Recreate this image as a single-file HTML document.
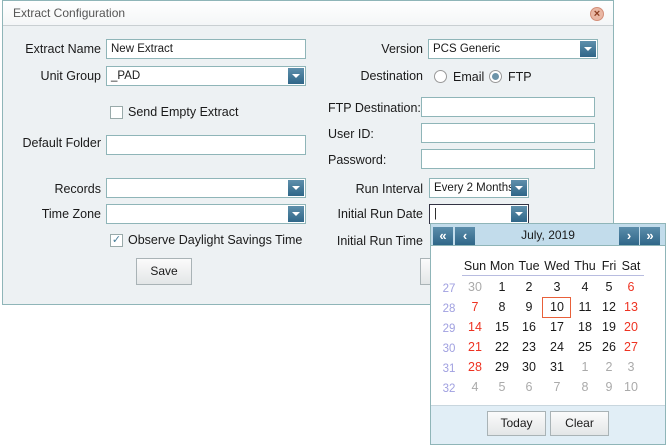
<!DOCTYPE html>
<html><head><meta charset="utf-8"><style>
*{box-sizing:border-box;margin:0;padding:0}
body{width:666px;height:445px;background:#fff;position:relative;overflow:hidden;font-family:"Liberation Sans",sans-serif;font-size:12px;color:#1a1a1a}
.a{position:absolute}
.dlg{left:2px;top:0;width:612px;height:305px;border:1px solid #8fb5b8;background:#edf1f3}
.title{left:3px;top:1px;width:610px;height:25px;background:linear-gradient(#fff,#f4f6f7);border-bottom:1px solid #c9cfd2}
.lbl{position:absolute;text-align:right;white-space:nowrap;font-size:12.5px}
.in{position:absolute;background:#fff;border:1px solid #8fb5b8;height:20px;padding:3px 4px;font-size:11.5px;white-space:nowrap;overflow:hidden}
.dd{position:absolute;right:1px;top:1px;width:16px;height:16px;background:linear-gradient(#5e8fab,#2f6688)}
.dd:after{content:"";position:absolute;left:4px;top:6px;border-left:4px solid transparent;border-right:4px solid transparent;border-top:4px solid #fff}
.cb{position:absolute;width:13px;height:13px;border:1px solid #9aa;background:#fff}
.btn{position:absolute;border:1px solid #a9b3b6;background:linear-gradient(#fbfbfb,#e3e6e7);text-align:center;font-size:12px}
.cal{left:430px;top:223px;width:236px;height:222px;border:1px solid #8fb5b8;background:#fff}
.hb{position:absolute;top:3px;width:20px;height:18px;background:linear-gradient(#5b8dab,#2f6688);color:#fff;font-size:13px;text-align:center;line-height:17px;font-weight:bold}
.c{position:absolute;width:26px;text-align:center;font-size:12.5px}
.g{color:#aaa}.r{color:#e32}.w{color:#a0a0e0;font-size:11.5px;width:20px}
</style></head><body>
<div class="a dlg"></div>
<div class="a title"></div>
<div class="a" style="left:13px;top:6px;color:#555;font-size:12px">Extract Configuration</div>
<div class="a" style="left:590px;top:7px;width:14px;height:14px;border-radius:50%;background:#e9b7a4;border:1px solid #d38e78;color:#8b3c20;font-size:11px;line-height:12px;text-align:center;font-weight:bold">×</div>

<div class="lbl" style="right:565px;top:42px">Extract Name</div>
<div class="in" style="left:106px;top:39px;width:200px">New Extract</div>
<div class="lbl" style="right:565px;top:69px">Unit Group</div>
<div class="in" style="left:106px;top:66px;width:200px">_PAD<div class="dd"></div></div>
<div class="cb" style="left:110px;top:106px"></div>
<div class="lbl" style="left:128px;top:105px">Send Empty Extract</div>
<div class="lbl" style="right:565px;top:136px">Default Folder</div>
<div class="in" style="left:106px;top:135px;width:200px"></div>
<div class="lbl" style="right:565px;top:182px">Records</div>
<div class="in" style="left:106px;top:178px;width:200px"><div class="dd"></div></div>
<div class="lbl" style="right:565px;top:207px">Time Zone</div>
<div class="in" style="left:106px;top:204px;width:200px"><div class="dd"></div></div>
<div class="cb" style="left:110px;top:234px;color:#4a7f9a;font-size:11px;line-height:11px;text-align:center">✓</div>
<div class="lbl" style="left:128px;top:233px">Observe Daylight Savings Time</div>
<div class="btn" style="left:136px;top:258px;width:56px;height:27px;line-height:25px">Save</div>

<div class="lbl" style="right:243px;top:42px">Version</div>
<div class="in" style="left:428px;top:39px;width:170px">PCS Generic<div class="dd"></div></div>
<div class="lbl" style="right:243px;top:69px">Destination</div>
<div class="a" style="left:434px;top:70px;width:13px;height:13px;border-radius:50%;border:1px solid #999;background:#fff"></div>
<div class="lbl" style="left:453px;top:70px">Email</div>
<div class="a" style="left:489px;top:70px;width:13px;height:13px;border-radius:50%;border:1px solid #999;background:#fff"><div style="margin:2px;width:7px;height:7px;border-radius:50%;background:#6d93a8"></div></div>
<div class="lbl" style="left:508px;top:70px">FTP</div>
<div class="lbl" style="left:328px;top:101px">FTP Destination:</div>
<div class="in" style="left:421px;top:97px;width:174px"></div>
<div class="lbl" style="left:328px;top:127px">User ID:</div>
<div class="in" style="left:421px;top:123px;width:174px"></div>
<div class="lbl" style="left:328px;top:153px">Password:</div>
<div class="in" style="left:421px;top:149px;width:174px"></div>
<div class="lbl" style="right:243px;top:182px">Run Interval</div>
<div class="in" style="left:429px;top:178px;width:100px">Every 2 Months<div class="dd"></div></div>
<div class="lbl" style="right:243px;top:207px">Initial Run Date</div>
<div class="in" style="left:429px;top:204px;width:100px;border-color:#334">|<div class="dd"></div></div>
<div class="lbl" style="right:243px;top:234px">Initial Run Time</div>
<div class="btn" style="left:420px;top:258px;width:20px;height:27px"></div>

<div class="a cal">
<div class="a" style="left:0;top:0;width:234px;height:22px;background:#c2dceb;border-bottom:1px solid #8fb5b8"></div>
<div class="hb" style="left:2px">«</div><div class="hb" style="left:24px">‹</div>
<div class="hb" style="left:188px">›</div><div class="hb" style="left:209px">»</div>
<div class="a" style="left:0;width:234px;top:4px;text-align:center;font-size:12px">July, 2019</div>
<div class="a" style="left:31px;top:51px;width:182px;height:1px;background:#b8bce0"></div>
<div class="a" style="left:0;top:181px;width:234px;height:39px;background:#e1eef6;border-top:1px solid #c8d6de"></div>
<div class="btn" style="left:56px;top:187px;width:59px;height:25px;line-height:23px">Today</div>
<div class="btn" style="left:119px;top:187px;width:59px;height:25px;line-height:23px">Clear</div>
</div>
<div class="a" style="left:430px;top:223px">
<div class="c" style="left:32px;top:36px">Sun</div><div class="c" style="left:59px;top:36px">Mon</div><div class="c" style="left:86px;top:36px">Tue</div><div class="c" style="left:114px;top:36px">Wed</div><div class="c" style="left:142px;top:36px">Thu</div><div class="c" style="left:166px;top:36px">Fri</div><div class="c" style="left:188px;top:36px">Sat</div>
<div class="a" style="left:112px;top:74px;width:29px;height:21px;border:1px solid #e8603a"></div>
<div class="c w" style="left:9px;top:60px">27</div><div class="c g" style="left:32px;top:57px">30</div><div class="c" style="left:59px;top:57px">1</div><div class="c" style="left:86px;top:57px">2</div><div class="c" style="left:114px;top:57px">3</div><div class="c" style="left:142px;top:57px">4</div><div class="c" style="left:166px;top:57px">5</div><div class="c r" style="left:188px;top:57px">6</div>
<div class="c w" style="left:9px;top:80px">28</div><div class="c r" style="left:32px;top:77px">7</div><div class="c" style="left:59px;top:77px">8</div><div class="c" style="left:86px;top:77px">9</div><div class="c" style="left:114px;top:77px">10</div><div class="c" style="left:142px;top:77px">11</div><div class="c" style="left:166px;top:77px">12</div><div class="c r" style="left:188px;top:77px">13</div>
<div class="c w" style="left:9px;top:100px">29</div><div class="c r" style="left:32px;top:97px">14</div><div class="c" style="left:59px;top:97px">15</div><div class="c" style="left:86px;top:97px">16</div><div class="c" style="left:114px;top:97px">17</div><div class="c" style="left:142px;top:97px">18</div><div class="c" style="left:166px;top:97px">19</div><div class="c r" style="left:188px;top:97px">20</div>
<div class="c w" style="left:9px;top:120px">30</div><div class="c r" style="left:32px;top:117px">21</div><div class="c" style="left:59px;top:117px">22</div><div class="c" style="left:86px;top:117px">23</div><div class="c" style="left:114px;top:117px">24</div><div class="c" style="left:142px;top:117px">25</div><div class="c" style="left:166px;top:117px">26</div><div class="c r" style="left:188px;top:117px">27</div>
<div class="c w" style="left:9px;top:140px">31</div><div class="c r" style="left:32px;top:137px">28</div><div class="c" style="left:59px;top:137px">29</div><div class="c" style="left:86px;top:137px">30</div><div class="c" style="left:114px;top:137px">31</div><div class="c g" style="left:142px;top:137px">1</div><div class="c g" style="left:166px;top:137px">2</div><div class="c g" style="left:188px;top:137px">3</div>
<div class="c w" style="left:9px;top:160px">32</div><div class="c g" style="left:32px;top:157px">4</div><div class="c g" style="left:59px;top:157px">5</div><div class="c g" style="left:86px;top:157px">6</div><div class="c g" style="left:114px;top:157px">7</div><div class="c g" style="left:142px;top:157px">8</div><div class="c g" style="left:166px;top:157px">9</div><div class="c g" style="left:188px;top:157px">10</div>
</div>
</body></html>
